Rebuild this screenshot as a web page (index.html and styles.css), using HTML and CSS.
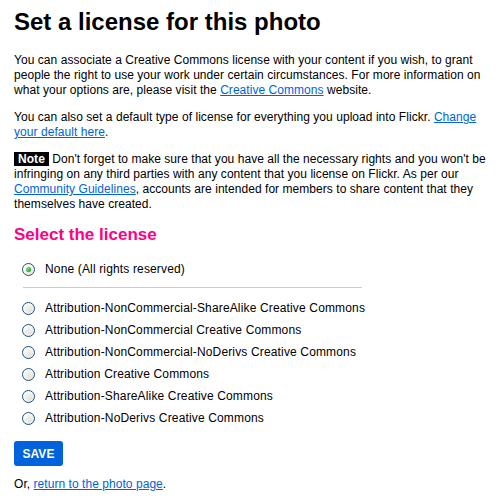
FILE: index.html
```html
<!DOCTYPE html>
<html>
<head>
<meta charset="utf-8">
<link rel="stylesheet" href="styles.css">
</head>
<body>
<div class="page">
  <h1 class="title">Set a license for this photo</h1>
  <p class="text">You can associate a Creative Commons license with your content if you wish, to grant people the right to use your work under certain circumstances. For more information on what your options are, please visit the <a href="#">Creative Commons</a> website.</p>
  <p class="text">You can also set a default type of license for everything you upload into Flickr. <a href="#">Change your default here</a>.</p>
  <p class="text"><span class="note">Note</span> Don't forget to make sure that you have all the necessary rights and you won't be infringing on any third parties with any content that you license on Flickr. As per our <a href="#">Community Guidelines</a>, accounts are intended for members to share content that they themselves have created.</p>
  <h2 class="subtitle">Select the license</h2>
  <form class="licenses">
    <label class="row"><input type="radio" name="lic" class="radio" checked><span>None (All rights reserved)</span></label>
    <div class="sep"></div>
    <label class="row"><input type="radio" name="lic" class="radio"><span>Attribution-NonCommercial-ShareAlike Creative Commons</span></label>
    <label class="row"><input type="radio" name="lic" class="radio"><span>Attribution-NonCommercial Creative Commons</span></label>
    <label class="row"><input type="radio" name="lic" class="radio"><span>Attribution-NonCommercial-NoDerivs Creative Commons</span></label>
    <label class="row"><input type="radio" name="lic" class="radio"><span>Attribution Creative Commons</span></label>
    <label class="row"><input type="radio" name="lic" class="radio"><span>Attribution-ShareAlike Creative Commons</span></label>
    <label class="row"><input type="radio" name="lic" class="radio"><span>Attribution-NoDerivs Creative Commons</span></label>
    <div class="actions"><button type="button" class="save">SAVE</button></div>
  </form>
  <p class="text back">Or, <a href="#">return to the photo page</a>.</p>
</div>
</body>
</html>
```
FILE: styles.css
```css
html, body {
  margin: 0;
  padding: 0;
  background: #fff;
}
body {
  font-family: "Liberation Sans", Arial, sans-serif;
  color: #000;
}
.page {
  padding: 8px 6px 0 14px;
}
.title {
  font-size: 24px;
  line-height: 28px;
  font-weight: bold;
  margin: 0 0 17px 0;
}
.text {
  font-size: 12px;
  line-height: 15px;
  letter-spacing: 0.05px;
  margin: 0 0 12px 0;
}
a {
  color: #0063dc;
  text-decoration: underline;
}
.note {
  background: #000;
  color: #fff;
  font-weight: bold;
  padding: 0 4px;
}
.subtitle {
  color: #ff0084;
  font-size: 17px;
  line-height: 21px;
  font-weight: bold;
  margin: 0 0 13px 0;
}
.licenses {
  margin: 0;
  display: flex;
  flex-direction: column;
}
.row {
  display: flex;
  align-items: center;
  height: 22px;
  padding-left: 8px;
  font-size: 12px;
  letter-spacing: 0.15px;
  gap: 10px;
}
.radio {
  appearance: none;
  -webkit-appearance: none;
  margin: 0;
  width: 13px;
  height: 13px;
  border-radius: 50%;
  border: 1px solid #1c5180;
  background: radial-gradient(circle at 65% 70%, #e4e4dc 0%, #f2f2ec 45%, #fff 80%);
  box-sizing: border-box;
  position: relative;
  flex: none;
}
.radio:checked::after {
  content: "";
  position: absolute;
  left: 3px;
  top: 3px;
  width: 5px;
  height: 5px;
  border-radius: 50%;
  background: radial-gradient(circle at 35% 35%, #8ee28e 0%, #21a121 70%);
}
.sep {
  height: 1px;
  background: #cccccc;
  width: 339px;
  margin: 7px 0 9px 9px;
}
.actions {
  margin-top: 12px;
}
.save {
  background: #0063dc;
  color: #fff;
  border: 0;
  border-radius: 3px;
  font-family: "Liberation Sans", Arial, sans-serif;
  font-weight: bold;
  font-size: 12px;
  height: 25px;
  width: 49px;
  padding: 0;
  cursor: pointer;
}
.back {
  margin-top: 11px;
}
```
